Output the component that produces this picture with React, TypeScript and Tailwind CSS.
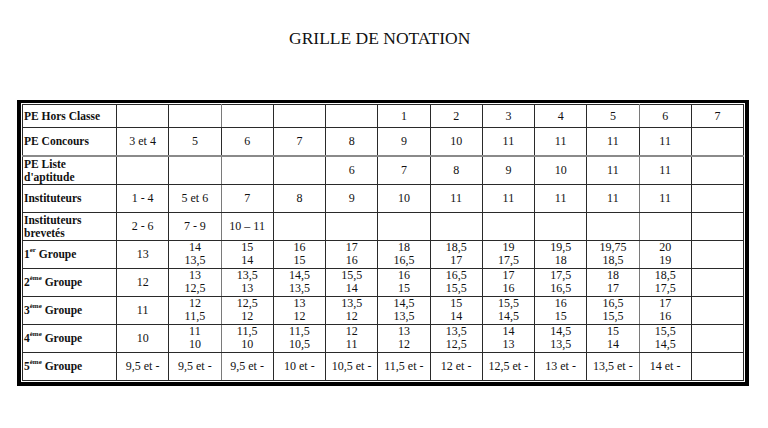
import { Fragment } from "react"

type Row = {
  readonly label: React.ReactNode
  readonly cells: readonly string[]
}

const rows: readonly Row[] = [
  { label: "PE Hors Classe", cells: ["", "", "", "", "", "1", "2", "3", "4", "5", "6", "7"] },
  { label: "PE Concours", cells: ["3 et 4", "5", "6", "7", "8", "9", "10", "11", "11", "11", "11", ""] },
  {
    label: (
      <>
        PE Liste
        <br />
        d'aptitude
      </>
    ),
    cells: ["", "", "", "", "6", "7", "8", "9", "10", "11", "11", ""],
  },
  { label: "Instituteurs", cells: ["1 - 4", "5 et 6", "7", "8", "9", "10", "11", "11", "11", "11", "11", ""] },
  {
    label: (
      <>
        Instituteurs
        <br />
        brevetés
      </>
    ),
    cells: ["2 - 6", "7 - 9", "10 – 11", "", "", "", "", "", "", "", "", ""],
  },
  {
    label: <Groupe n="1" sup="er" />,
    cells: ["13", "14|13,5", "15|14", "16|15", "17|16", "18|16,5", "18,5|17", "19|17,5", "19,5|18", "19,75|18,5", "20|19", ""],
  },
  {
    label: <Groupe n="2" sup="ème" />,
    cells: ["12", "13|12,5", "13,5|13", "14,5|13,5", "15,5|14", "16|15", "16,5|15,5", "17|16", "17,5|16,5", "18|17", "18,5|17,5", ""],
  },
  {
    label: <Groupe n="3" sup="ème" />,
    cells: ["11", "12|11,5", "12,5|12", "13|12", "13,5|12", "14,5|13,5", "15|14", "15,5|14,5", "16|15", "16,5|15,5", "17|16", ""],
  },
  {
    label: <Groupe n="4" sup="ème" />,
    cells: ["10", "11|10", "11,5|10", "11,5|10,5", "12|11", "13|12", "13,5|12,5", "14|13", "14,5|13,5", "15|14", "15,5|14,5", ""],
  },
  {
    label: <Groupe n="5" sup="ème" />,
    cells: ["9,5 et -", "9,5 et -", "9,5 et -", "10 et -", "10,5 et -", "11,5 et -", "12 et -", "12,5 et -", "13 et -", "13,5 et -", "14 et -", ""],
  },
]

function Groupe({ n, sup }: { readonly n: string; readonly sup: string }): React.JSX.Element {
  return (
    <>
      {n}
      <sup className="relative top-[-1px] align-top text-[7px] leading-none">{sup}</sup> Groupe
    </>
  )
}

export default function App(): React.JSX.Element {
  return (
    <div className="flex h-[428px] w-[768px] flex-col items-start bg-white text-[#111] [font-family:Liberation_Serif,Times_New_Roman,serif]">
      <h1 className="ml-[289px] mt-[28px] text-[17.5px] leading-[20px]">GRILLE DE NOTATION</h1>

      <div className="ml-[17px] mt-[52px] border-b-[4px] border-l-[4px] border-r-[4px] border-t-[3px] border-black p-px">
        <table className="w-[722px] table-fixed border-collapse">
          <colgroup>
            <col className="w-[94px]" />
            {Array.from({ length: 12 }, (_, i) => (
              <col key={i} />
            ))}
          </colgroup>
          <tbody>
            {rows.map((row, r) => (
              <tr key={r} className={r === 0 ? "h-[23px]" : "h-[28px]"}>
                <th
                  className={
                    r === 1
                      ? "border border-b-2 border-[#2a2a2a] border-b-[#8a8a8a] pl-[1px] text-left align-middle text-[11.5px] font-bold leading-[13px]"
                      : "border border-[#2a2a2a] pl-[1px] pt-[1px] text-left align-middle text-[11.5px] font-bold leading-[13px]"
                  }
                >
                  {row.label}
                </th>
                {row.cells.map((cell, c) => (
                  <td
                    key={c}
                    className={
                      r === 1
                        ? "border border-b-2 border-[#2a2a2a] border-b-[#8a8a8a] text-center align-middle text-[12px] leading-[13px]"
                        : c === 1 || c === 9
                          ? "border border-[#2a2a2a] border-r-[#7a7a7a] text-center align-middle text-[12px] leading-[13px]"
                          : "border border-[#2a2a2a] text-center align-middle text-[12px] leading-[13px]"
                    }
                  >
                    {cell.split("|").map((line, i) => (
                      <Fragment key={i}>
                        {i > 0 && <br />}
                        {line}
                      </Fragment>
                    ))}
                  </td>
                ))}
              </tr>
            ))}
          </tbody>
        </table>
      </div>
    </div>
  )
}
